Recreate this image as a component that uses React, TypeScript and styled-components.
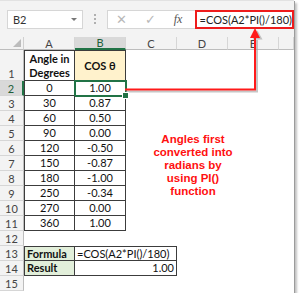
import styled, { createGlobalStyle } from "styled-components";

const GlobalStyle = createGlobalStyle`
  html, body { margin: 0; padding: 0; background: #fff; }
  body { font-family: Lato, "Liberation Sans", sans-serif; color: #111; }
`;

const COLS = ["A", "B", "C", "D", "E", ""];

const rows: { a: string; b: string }[] = [
  { a: "0", b: "1.00" },
  { a: "30", b: "0.87" },
  { a: "60", b: "0.50" },
  { a: "90", b: "0.00" },
  { a: "120", b: "-0.50" },
  { a: "150", b: "-0.87" },
  { a: "180", b: "-1.00" },
  { a: "250", b: "-0.34" },
  { a: "270", b: "0.00" },
  { a: "360", b: "1.00" },
];

const Window = styled.div`
  position: relative;
  width: 294px;
  height: 293px;
  background: #fff;
  box-shadow: 1px 1px 0 #9c9c9c, 3px 3px 2px #c4c4c4;
  overflow: hidden;
  display: flex;
  flex-direction: column;
`;

const Toolbar = styled.div`
  height: 37px;
  flex: none;
  background: #f3f3f3;
  border-top: 1px solid #e2e2e2;
  box-sizing: border-box;
  display: flex;
  align-items: center;
  padding-left: 7px;
`;

const NameBox = styled.div`
  width: 79px;
  height: 19px;
  box-sizing: border-box;
  background: #fff;
  border: 1px solid #d6d6d6;
  display: flex;
  align-items: center;
  justify-content: space-between;
  padding: 0 5px 0 5px;
  font-size: 11px;
  color: #333;
`;

const Caret = styled.span`
  width: 0;
  height: 0;
  border-left: 3px solid transparent;
  border-right: 3px solid transparent;
  border-top: 3px solid #777;
`;

const Grip = styled.div`
  width: 25px;
  display: flex;
  flex-direction: column;
  align-items: center;
  gap: 2px;
  span {
    width: 2px;
    height: 2px;
    background: #b0b0b0;
  }
`;

const FormulaBox = styled.div`
  flex: 1;
  height: 19px;
  box-sizing: border-box;
  background: #fff;
  border: 1px solid #d6d6d6;
  border-right: none;
  display: flex;
  align-items: center;
`;

const BarIcon = styled.span<{ $w: number }>`
  width: ${(p) => p.$w}px;
  display: flex;
  justify-content: center;
  align-items: center;
  color: #b8b8b8;
  font-size: 13px;
`;

const Fx = styled.span`
  width: 27px;
  text-align: center;
  font-family: "Liberation Serif", serif;
  font-style: italic;
  font-size: 12px;
  color: #555;
`;

const FormulaText = styled.div`
  flex: 1;
  height: 19px;
  box-sizing: border-box;
  margin-left: 3px;
  border: 2px solid #ee1c1c;
  display: flex;
  align-items: center;
  padding-left: 3px;
  font-size: 11px;
  white-space: nowrap;
  color: #222;
`;

const Sheet = styled.div`
  flex: 1;
  display: grid;
  grid-template-columns: 24px repeat(5, 51px) 1fr;
  grid-template-rows: 13px 31px repeat(14, 15px) 1fr;
  font-size: 11px;
`;

const Corner = styled.div`
  background: #f3f3f3;
  border-right: 1px solid #d0d0d0;
  border-bottom: 1px solid #bdbdbd;
  box-sizing: border-box;
  position: relative;
  &::after {
    content: "";
    position: absolute;
    right: 2px;
    bottom: 2px;
    border-left: 8px solid transparent;
    border-bottom: 8px solid #bcbcbc;
  }
`;

const ColHead = styled.div<{ $active?: boolean }>`
  box-sizing: border-box;
  background: ${(p) => (p.$active ? "#d9d9d9" : "#f3f3f3")};
  border-right: 1px solid #d6d6d6;
  border-bottom: ${(p) => (p.$active ? "2px solid #217346" : "1px solid #bdbdbd")};
  color: ${(p) => (p.$active ? "#1e5e3a" : "#444")};
  font-size: 11px;
  display: flex;
  align-items: center;
  justify-content: center;
`;

const RowHead = styled.div<{ $active?: boolean; $bottom?: boolean }>`
  box-sizing: border-box;
  background: ${(p) => (p.$active ? "#d9d9d9" : "#f3f3f3")};
  border-right: ${(p) => (p.$active ? "2px solid #217346" : "1px solid #bdbdbd")};
  border-bottom: 1px solid #d6d6d6;
  color: ${(p) => (p.$active ? "#1e5e3a" : "#444")};
  font-size: 11px;
  display: flex;
  justify-content: center;
  align-items: ${(p) => (p.$bottom ? "flex-end" : "center")};
`;

const Cell = styled.div<{
  $box?: boolean;
  $top?: boolean;
  $left?: boolean;
  $fill?: string;
  $bold?: boolean;
  $wrap?: boolean;
  $align?: "left" | "center" | "right";
  $span?: number;
}>`
  box-sizing: border-box;
  position: relative;
  grid-column: ${(p) => (p.$span ? `span ${p.$span}` : "auto")};
  background: ${(p) => p.$fill || "transparent"};
  border-right: ${(p) => (p.$box ? "1px solid #3c3c3c" : "none")};
  border-bottom: ${(p) => (p.$box ? "1px solid #3c3c3c" : "none")};
  border-top: ${(p) => (p.$top ? "1px solid #3c3c3c" : "none")};
  border-left: ${(p) => (p.$left ? "1px solid #3c3c3c" : "none")};
  font-weight: ${(p) => (p.$bold ? 700 : 400)};
  display: flex;
  align-items: center;
  justify-content: ${(p) =>
    p.$align === "left" ? "flex-start" : p.$align === "right" ? "flex-end" : "center"};
  padding: 0 2px;
  white-space: ${(p) => (p.$wrap ? "normal" : "nowrap")};
  text-align: center;
  line-height: 14px;
`;

const Selected = styled(Cell)`
  outline: 2px solid #217346;
  outline-offset: -1px;
  &::after {
    content: "";
    position: absolute;
    right: -4px;
    bottom: -4px;
    width: 5px;
    height: 5px;
    background: #217346;
    border: 1px solid #fff;
    z-index: 2;
  }
`;

const Overlay = styled.svg`
  position: absolute;
  left: 0;
  top: 0;
  pointer-events: none;
`;

const Note = styled.div`
  position: absolute;
  left: 141px;
  top: 133px;
  width: 104px;
  text-align: center;
  font-family: "Liberation Sans", Arial, sans-serif;
  font-weight: 700;
  font-size: 11.5px;
  line-height: 13px;
  color: #ff1010;
`;

const Blank = () => <Cell />;

export default function App() {
  return (
    <>
      <GlobalStyle />
      <Window>
        <Toolbar>
          <NameBox>
            B2
            <Caret />
          </NameBox>
          <Grip>
            <span />
            <span />
            <span />
          </Grip>
          <FormulaBox>
            <BarIcon $w={28}>✕</BarIcon>
            <BarIcon $w={29}>✓</BarIcon>
            <Fx>fx</Fx>
            <FormulaText>=COS(A2*PI()/180)</FormulaText>
          </FormulaBox>
        </Toolbar>
        <Sheet>
          <Corner />
          {COLS.map((c, i) => (
            <ColHead key={i} $active={c === "B"}>
              {c}
            </ColHead>
          ))}

          <RowHead $bottom>1</RowHead>
          <Cell $box $top $left $bold $wrap>
            Angle in Degrees
          </Cell>
          <Cell $box $top $bold $fill="#fff2cc">
            COS θ
          </Cell>
          <Blank />
          <Blank />
          <Blank />
          <Blank />

          {rows.map((r, i) => {
            const n = i + 2;
            const B = n === 2 ? Selected : Cell;
            return [
              <RowHead key={`h${n}`} $active={n === 2}>
                {n}
              </RowHead>,
              <Cell key={`a${n}`} $box $left>
                {r.a}
              </Cell>,
              <B key={`b${n}`} $box>
                {r.b}
              </B>,
              <Blank key={`c${n}`} />,
              <Blank key={`d${n}`} />,
              <Blank key={`e${n}`} />,
              <Blank key={`f${n}`} />,
            ];
          })}

          <RowHead>12</RowHead>
          {COLS.map((_, i) => (
            <Blank key={i} />
          ))}

          <RowHead>13</RowHead>
          <Cell $box $top $left $bold $fill="#e2efda" $align="left">
            Formula
          </Cell>
          <Cell $box $top $span={2} $align="left">
            =COS(A2*PI()/180)
          </Cell>
          <Blank />
          <Blank />
          <Blank />

          <RowHead>14</RowHead>
          <Cell $box $left $bold $fill="#e2efda" $align="left">
            Result
          </Cell>
          <Cell $box $span={2} $align="right">
            1.00
          </Cell>
          <Blank />
          <Blank />
          <Blank />

          <RowHead>15</RowHead>
          {COLS.map((_, i) => (
            <Blank key={i} />
          ))}
        </Sheet>

        <Overlay width="294" height="293" viewBox="0 0 294 293">
          <g fill="none" stroke="#a0a0a0" strokeWidth="2" opacity="0.6">
            <polyline points="126,91.5 257,91.5 257,40" />
          </g>
          <polygon points="251,38 261,38 256,29" fill="#a0a0a0" opacity="0.6" transform="translate(1.5 1.5)" />
          <polyline points="125,89.5 255,89.5 255,37" fill="none" stroke="#ff1a1a" strokeWidth="2" />
          <polygon points="250,38 260,38 255,28" fill="#ff1a1a" />
        </Overlay>
        <Note>
          Angles first
          <br />
          converted into
          <br />
          radians by
          <br />
          using PI()
          <br />
          function
        </Note>
      </Window>
    </>
  );
}
